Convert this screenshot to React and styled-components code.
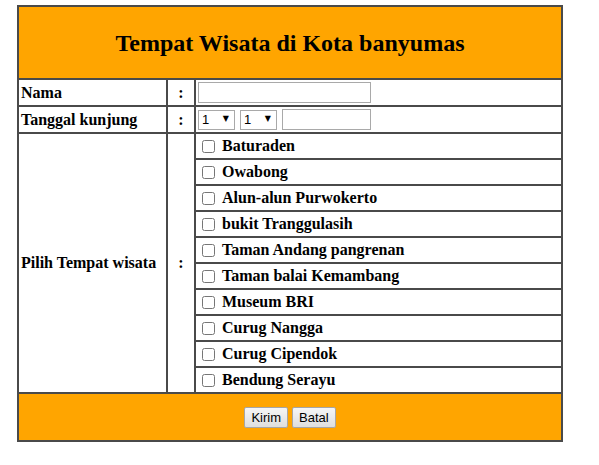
import React from "react";
import styled, { createGlobalStyle } from "styled-components";

const GlobalStyle = createGlobalStyle`
  html, body {
    margin: 0;
    padding: 0;
    background: #ffffff;
  }
  body {
    font-family: "Liberation Serif", "Times New Roman", serif;
    color: #000;
  }
`;

const Page = styled.div`
  padding: 5px 0 0 17px;
`;

const FormTable = styled.table`
  width: 546px;
  border-collapse: collapse;
  border: 2px solid #4a4a4a;

  td {
    border: 2px solid #4a4a4a;
    padding: 1px 2px;
    font-size: 16px;
    font-weight: bold;
  }
`;

const Banner = styled.td`
  && {
    background: #ffa500;
    height: ${(p) => p.$h}px;
    text-align: center;
    vertical-align: middle;
    padding: 0;
  }
`;

const Title = styled.h2`
  margin: 0;
  font-size: 24px;
  font-weight: bold;
  line-height: 28px;
`;

const Label = styled.td`
  && {
    width: 143px;
    height: ${(p) => p.$h || 22}px;
    vertical-align: middle;
  }
`;

const Colon = styled.td`
  && {
    width: 22px;
    text-align: center;
    vertical-align: middle;
  }
`;

const Field = styled.td`
  && {
    height: ${(p) => p.$h || 24}px;
    padding: 0 2px;
    vertical-align: middle;
  }
`;

const TextInput = styled.input`
  box-sizing: border-box;
  width: ${(p) => p.$w}px;
  height: 21px;
  margin: 0;
  border: 1px solid #a9a9a9;
  padding: 1px 2px;
  font-size: 13px;
  vertical-align: middle;
`;

const SelectWrap = styled.span`
  position: relative;
  display: inline-block;
  margin-right: 5px;
  vertical-align: middle;

  &::after {
    content: "▼";
    position: absolute;
    right: 6px;
    top: 4px;
    font-family: "DejaVu Sans", sans-serif;
    font-size: 8px;
    color: #000;
    pointer-events: none;
  }
`;

const Select = styled.select`
  display: block;
  box-sizing: border-box;
  width: 37px;
  height: 20px;
  margin: 0;
  border: 1px solid #a9a9a9;
  background: #fff;
  color: #000;
  appearance: none;
  font-family: "Liberation Sans", Arial, sans-serif;
  font-size: 13px;
  padding: 0 0 0 3px;
`;

const Choice = styled.label`
  display: flex;
  align-items: center;
  height: 24px;
  gap: 7px;
  padding-left: 4px;
`;

const Check = styled.input`
  width: 13px;
  height: 13px;
  margin: 0;
  accent-color: #dcdcdc;
`;

const Button = styled.button`
  font-family: "Liberation Sans", Arial, sans-serif;
  font-size: 13px;
  height: 21px;
  padding: 0 6px;
  margin: 0 2px;
  color: #000;
  background: linear-gradient(#f6f6f6, #dedede);
  border: 1px solid #a6a6a6;
  border-radius: 2px;
`;

const places = [
  "Baturaden",
  "Owabong",
  "Alun-alun Purwokerto",
  "bukit Tranggulasih",
  "Taman Andang pangrenan",
  "Taman balai Kemambang",
  "Museum BRI",
  "Curug Nangga",
  "Curug Cipendok",
  "Bendung Serayu",
];

function DaySelect() {
  return (
    <SelectWrap>
      <Select defaultValue="1">
        <option>1</option>
      </Select>
    </SelectWrap>
  );
}

export default function App() {
  return (
    <Page>
      <GlobalStyle />
      <FormTable>
        <tbody>
          <tr>
            <Banner colSpan={3} $h={71}>
              <Title>Tempat Wisata di Kota banyumas</Title>
            </Banner>
          </tr>
          <tr>
            <Label $h={23}>Nama</Label>
            <Colon>:</Colon>
            <Field $h={23}>
              <TextInput type="text" $w={173} />
            </Field>
          </tr>
          <tr>
            <Label $h={23}>Tanggal kunjung</Label>
            <Colon>:</Colon>
            <Field $h={23}>
              <DaySelect />
              <DaySelect />
              <TextInput type="text" $w={89} />
            </Field>
          </tr>
          {places.map((name, i) => (
            <tr key={name}>
              {i === 0 && (
                <>
                  <Label rowSpan={places.length}>Pilih Tempat wisata</Label>
                  <Colon rowSpan={places.length}>:</Colon>
                </>
              )}
              <Field>
                <Choice>
                  <Check type="checkbox" />
                  {name}
                </Choice>
              </Field>
            </tr>
          ))}
          <tr>
            <Banner colSpan={3} $h={46}>
              <Button>Kirim</Button>
              <Button>Batal</Button>
            </Banner>
          </tr>
        </tbody>
      </FormTable>
    </Page>
  );
}
